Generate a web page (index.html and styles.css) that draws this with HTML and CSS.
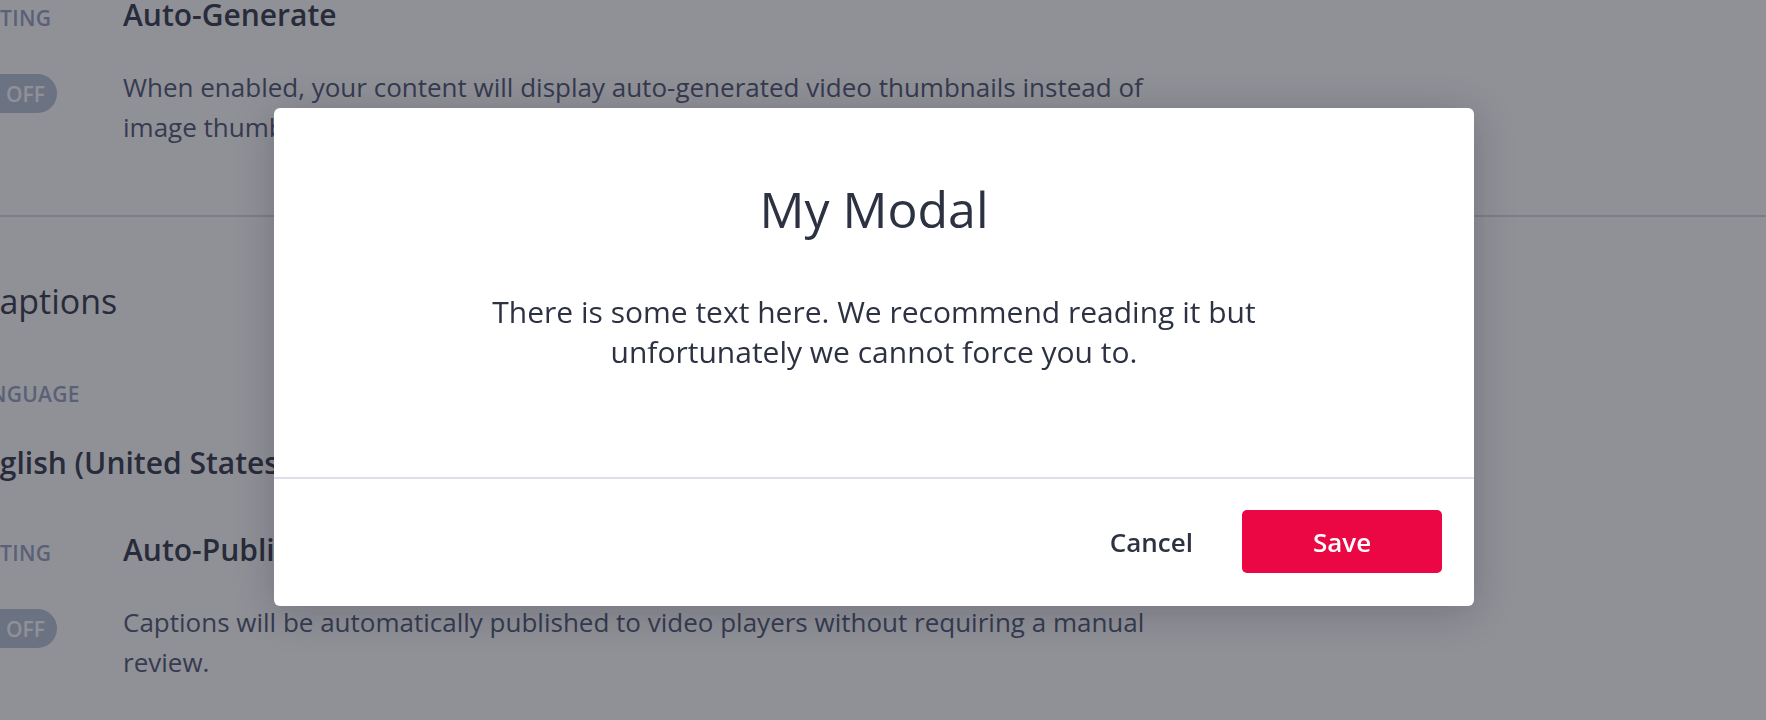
FILE: index.html
```html
<!DOCTYPE html>
<html lang="en">
<head>
<meta charset="utf-8">
<title>My Modal</title>
<link rel="stylesheet" href="styles.css">
</head>
<body>
<div class="page">
  <section class="setting">
    <div class="label">Setting</div>
    <h3 class="setting-title">Auto-Generate</h3>
    <div class="toggle"><span>OFF</span></div>
    <p class="desc">When enabled, your content will display auto-generated video thumbnails instead of image thumbnails.</p>
  </section>
  <hr class="rule">
  <section class="captions">
    <h2 class="section-title">Captions</h2>
    <div class="label lang-label">Language</div>
    <div class="value">English (United States)</div>
    <div class="setting second">
      <div class="label">Setting</div>
      <h3 class="setting-title">Auto-Publish</h3>
      <div class="toggle"><span>OFF</span></div>
      <p class="desc">Captions will be automatically published to video players without requiring a manual review.</p>
    </div>
  </section>
</div>

<div class="overlay">
  <div class="modal" role="dialog" aria-labelledby="modal-title">
    <div class="modal-body">
      <h1 class="modal-title" id="modal-title">My Modal</h1>
      <p class="modal-text">There is some text here. We recommend reading it but unfortunately we cannot force you to.</p>
    </div>
    <div class="modal-footer">
      <button class="btn btn-cancel" type="button">Cancel</button>
      <button class="btn btn-save" type="button">Save</button>
    </div>
  </div>
</div>
</body>
</html>
```

FILE: styles.css
```css
* { box-sizing: border-box; }

html, body {
  margin: 0;
  padding: 0;
  width: 1766px;
  height: 720px;
  overflow: hidden;
  background: #ffffff;
  font-family: "Open Sans", "Noto Sans", "Liberation Sans", sans-serif;
  color: #2e3445;
}

.page {
  margin: -5px 0 0 -36px;
  width: calc(100% + 36px);
}

.setting {
  display: grid;
  grid-template-columns: 159px 1040px;
  row-gap: 32px;
  align-items: baseline;
  padding-bottom: 68px;
}

.setting.second {
  margin-top: 47px;
  padding-bottom: 0;
}

.label {
  font-size: 21px;
  line-height: 28px;
  font-weight: 600;
  text-transform: uppercase;
  letter-spacing: 0.3px;
  color: #93a0be;
}

.setting-title {
  margin: 0;
  font-size: 30px;
  line-height: 40px;
  font-weight: 600;
  color: #2e3445;
}

.toggle {
  align-self: start;
  margin-top: 7px;
  width: 93px;
  height: 39px;
  border-radius: 20px;
  background: #b5c2d5;
  display: flex;
  align-items: center;
  justify-content: flex-end;
  padding-right: 12px;
  font-size: 21px;
  font-weight: 600;
  color: #ffffff;
}

.desc {
  align-self: start;
  margin: 0;
  font-size: 26px;
  line-height: 40px;
  color: #4a5570;
}

.rule {
  margin: 0;
  border: 0;
  height: 2px;
  background: #d6dae2;
}

.captions {
  padding-top: 60px;
}

.section-title {
  margin: 0 0 0 14px;
  font-size: 34px;
  line-height: 48px;
  font-weight: 400;
  color: #2e3445;
}

.lang-label {
  margin-top: 55px;
}

.value {
  margin-top: 35px;
  font-size: 30px;
  line-height: 40px;
  font-weight: 600;
  color: #2e3445;
}

/* overlay + modal */
.overlay {
  position: fixed;
  inset: 0;
  background: rgba(33, 34, 47, 0.5);
  display: flex;
  justify-content: center;
  align-items: center;
  padding: 0 18px 6px 0;
}

.modal {
  width: 1200px;
  background: #ffffff;
  border-radius: 6px;
  box-shadow: 0 6px 40px rgba(20, 22, 35, 0.22);
}

.modal-body {
  padding: 69px 0 105px;
  text-align: center;
}

.modal-title {
  margin: 0;
  font-size: 50px;
  line-height: 65px;
  font-weight: 400;
  color: #2d3243;
}

.modal-text {
  margin: 50px auto 0;
  max-width: 800px;
  font-size: 30px;
  line-height: 40px;
  color: #2d3243;
}

.modal-footer {
  border-top: 2px solid #dde0e8;
  padding: 31px 32px 33px;
  display: flex;
  justify-content: flex-end;
  align-items: center;
  gap: 25px;
}

.btn {
  font-family: "Open Sans", "Noto Sans", "Liberation Sans", sans-serif;
  font-size: 26px;
  font-weight: 600;
  height: 63px;
  border: 0;
  cursor: pointer;
  line-height: 1;
}

.btn-cancel {
  background: transparent;
  color: #2d3243;
  padding: 0 24px;
}

.btn-save {
  width: 200px;
  background: #eb0744;
  color: #ffffff;
  border-radius: 5px;
}
```
